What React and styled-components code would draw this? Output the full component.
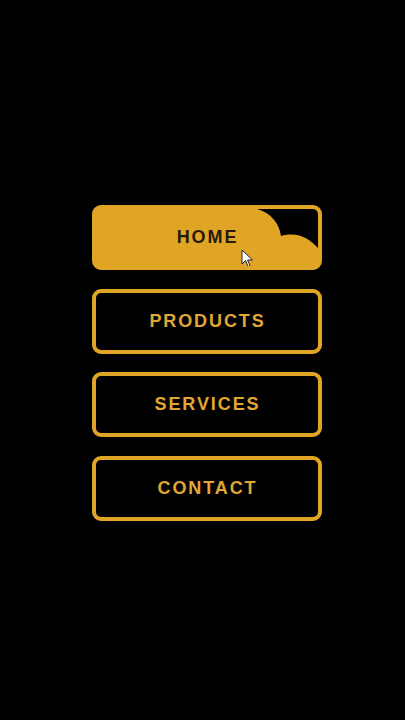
import React from "react";
import styled, { createGlobalStyle } from "styled-components";

const GlobalStyle = createGlobalStyle`
  html, body {
    margin: 0;
    padding: 0;
    background: #000;
  }
  body {
    font-family: "Liberation Sans", Arial, sans-serif;
  }
`;

const Page = styled.div`
  width: 405px;
  height: 720px;
  background: #000;
  display: flex;
  flex-direction: column;
  align-items: flex-start;
  padding: 205px 0 0 92px;
  box-sizing: border-box;
  gap: 18.5px;
`;

const NavButton = styled.a`
  position: relative;
  display: flex;
  align-items: center;
  justify-content: center;
  width: 230px;
  height: 65px;
  box-sizing: border-box;
  border: 4px solid #e1a526;
  border-radius: 9px;
  background: ${p => (p.$active ? "#e1a526" : "#000")};
  color: ${p => (p.$active ? "#27190b" : "#e0a733")};
  font-size: 18px;
  font-weight: 700;
  letter-spacing: 1.9px;
  text-decoration: none;
  overflow: hidden;
  cursor: pointer;
`;

const Label = styled.span`
  position: relative;
  z-index: 1;
  margin-left: 1px;
`;

const Cloud = styled.svg`
  position: absolute;
  top: 0;
  right: 0;
  width: 61px;
  height: 42px;
`;

const Pointer = styled.svg`
  position: absolute;
  left: 145px;
  top: 40px;
  width: 13px;
  height: 19px;
  z-index: 2;
`;

const items = ["HOME", "PRODUCTS", "SERVICES", "CONTACT"];

export default function App() {
  return (
    <>
      <GlobalStyle />
      <Page>
        {items.map((name, i) => (
          <NavButton key={name} $active={i === 0}>
            {i === 0 && (
              <Cloud viewBox="0 0 61 42">
                <path
                  d="M0,0 H56 Q61,0 61,5 V39 C53,30 41,22 24,27 C22,14 14,4 0,0 Z"
                  fill="#000"
                />
              </Cloud>
            )}
            <Label>{name}</Label>
            {i === 0 && (
              <Pointer viewBox="0 0 13 19">
                <path
                  d="M1,1 L1,15 L4.5,11.5 L7,17.5 L9,16.6 L6.6,11 L11.5,11 Z"
                  fill="#fff"
                  stroke="#222"
                  strokeWidth="1"
                  strokeLinejoin="round"
                />
              </Pointer>
            )}
          </NavButton>
        ))}
      </Page>
    </>
  );
}
